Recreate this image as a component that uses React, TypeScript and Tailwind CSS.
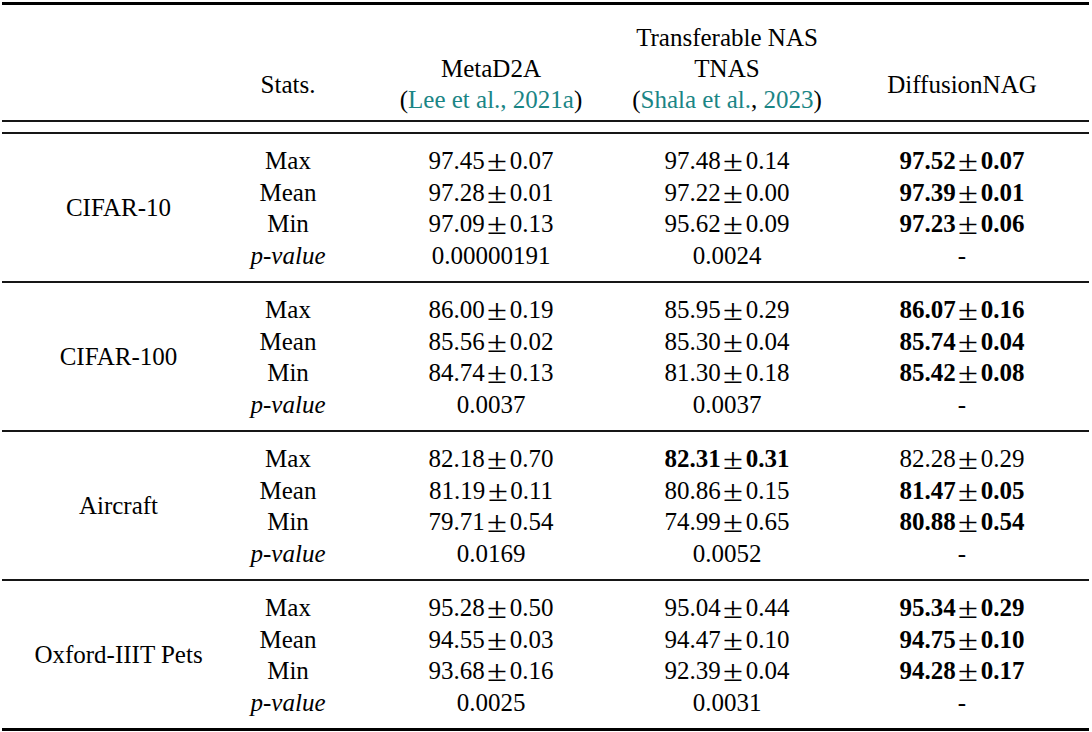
import React from "react";

type Cell = { v: string; b?: boolean };
type Row = { stat: string; cells: Cell[] };
type Section = { name: string; rows: Row[] };

const c = (v: string, b = false): Cell => ({ v, b });

const sections: Section[] = [
  {
    name: "CIFAR-10",
    rows: [
      { stat: "Max", cells: [c("97.45±0.07"), c("97.48±0.14"), c("97.52±0.07", true)] },
      { stat: "Mean", cells: [c("97.28±0.01"), c("97.22±0.00"), c("97.39±0.01", true)] },
      { stat: "Min", cells: [c("97.09±0.13"), c("95.62±0.09"), c("97.23±0.06", true)] },
      { stat: "p-value", cells: [c("0.00000191"), c("0.0024"), c("-")] },
    ],
  },
  {
    name: "CIFAR-100",
    rows: [
      { stat: "Max", cells: [c("86.00±0.19"), c("85.95±0.29"), c("86.07±0.16", true)] },
      { stat: "Mean", cells: [c("85.56±0.02"), c("85.30±0.04"), c("85.74±0.04", true)] },
      { stat: "Min", cells: [c("84.74±0.13"), c("81.30±0.18"), c("85.42±0.08", true)] },
      { stat: "p-value", cells: [c("0.0037"), c("0.0037"), c("-")] },
    ],
  },
  {
    name: "Aircraft",
    rows: [
      { stat: "Max", cells: [c("82.18±0.70"), c("82.31±0.31", true), c("82.28±0.29")] },
      { stat: "Mean", cells: [c("81.19±0.11"), c("80.86±0.15"), c("81.47±0.05", true)] },
      { stat: "Min", cells: [c("79.71±0.54"), c("74.99±0.65"), c("80.88±0.54", true)] },
      { stat: "p-value", cells: [c("0.0169"), c("0.0052"), c("-")] },
    ],
  },
  {
    name: "Oxford-IIIT Pets",
    rows: [
      { stat: "Max", cells: [c("95.28±0.50"), c("95.04±0.44"), c("95.34±0.29", true)] },
      { stat: "Mean", cells: [c("94.55±0.03"), c("94.47±0.10"), c("94.75±0.10", true)] },
      { stat: "Min", cells: [c("93.68±0.16"), c("92.39±0.04"), c("94.28±0.17", true)] },
      { stat: "p-value", cells: [c("0.0025"), c("0.0031"), c("-")] },
    ],
  },
];

function Value({ cell }: { cell: Cell }) {
  const parts = cell.v.split("±");
  if (parts.length === 1) {
    return <span className={cell.b ? "font-bold" : ""}>{cell.v}</span>;
  }
  return (
    <span className="whitespace-nowrap">
      <span className={cell.b ? "font-bold" : ""}>{parts[0]}</span>
      <span className="inline-block w-[25px] text-center font-normal">
        <span className="inline-block scale-x-[1.45] scale-y-[1.2]">±</span>
      </span>
      <span className={cell.b ? "font-bold" : ""}>{parts[1]}</span>
    </span>
  );
}

const cols = "grid grid-cols-[233px_106px_300px_172px_276px]";
const cell = "flex flex-col items-center whitespace-nowrap";
const lastCell = "flex flex-col items-center whitespace-nowrap pl-[22px]";

function Rule({ thick = false }: { thick?: boolean }) {
  return <div className={thick ? "h-[3px] bg-black" : "h-[2px] bg-[#161616]"} />;
}

export default function App() {
  return (
    <div
      className="w-[1092px] h-[732px] bg-white overflow-hidden text-black text-[25px]"
      style={{ fontFamily: '"Liberation Serif", "Times New Roman", serif' }}
    >
      <div className="ml-[2px] w-[1087px] pt-[2px]">
        <Rule thick />
        {/* Header */}
        <div className={`${cols} items-end pt-[17px] pb-[5px] leading-[31px]`}>
          <div />
          <div className={`${cell} mb-[15.5px]`}>Stats.</div>
          <div className={cell}>
            <span>MetaD2A</span>
            <span>
              (<span className="text-[#1a8585]">Lee et al., 2021a</span>)
            </span>
          </div>
          <div className={cell}>
            <span>Transferable NAS</span>
            <span>TNAS</span>
            <span>
              (<span className="text-[#1a8585]">Shala et al.</span>,{" "}
              <span className="text-[#1a8585]">2023</span>)
            </span>
          </div>
          <div className={`${lastCell} mb-[15.5px]`}>DiffusionNAG</div>
        </div>
        <Rule />
        <div className="h-[10px]" />
        <Rule />
        {sections.map((s, si) => (
          <React.Fragment key={s.name}>
            <div className={`${cols} grid-rows-[repeat(4,31.5px)] pt-[11px] pb-[10px] leading-[31.5px]`}>
              <div className={`${cell} row-span-4 self-center`}>{s.name}</div>
              {s.rows.map((r) => (
                <React.Fragment key={r.stat}>
                  <div className={`${cell} ${r.stat === "p-value" ? "italic" : ""}`}>{r.stat}</div>
                  {r.cells.map((cl, i) => (
                    <div key={i} className={i === 2 ? lastCell : cell}>
                      <Value cell={cl} />
                    </div>
                  ))}
                </React.Fragment>
              ))}
            </div>
            <Rule thick={si === sections.length - 1} />
          </React.Fragment>
        ))}
      </div>
    </div>
  );
}
